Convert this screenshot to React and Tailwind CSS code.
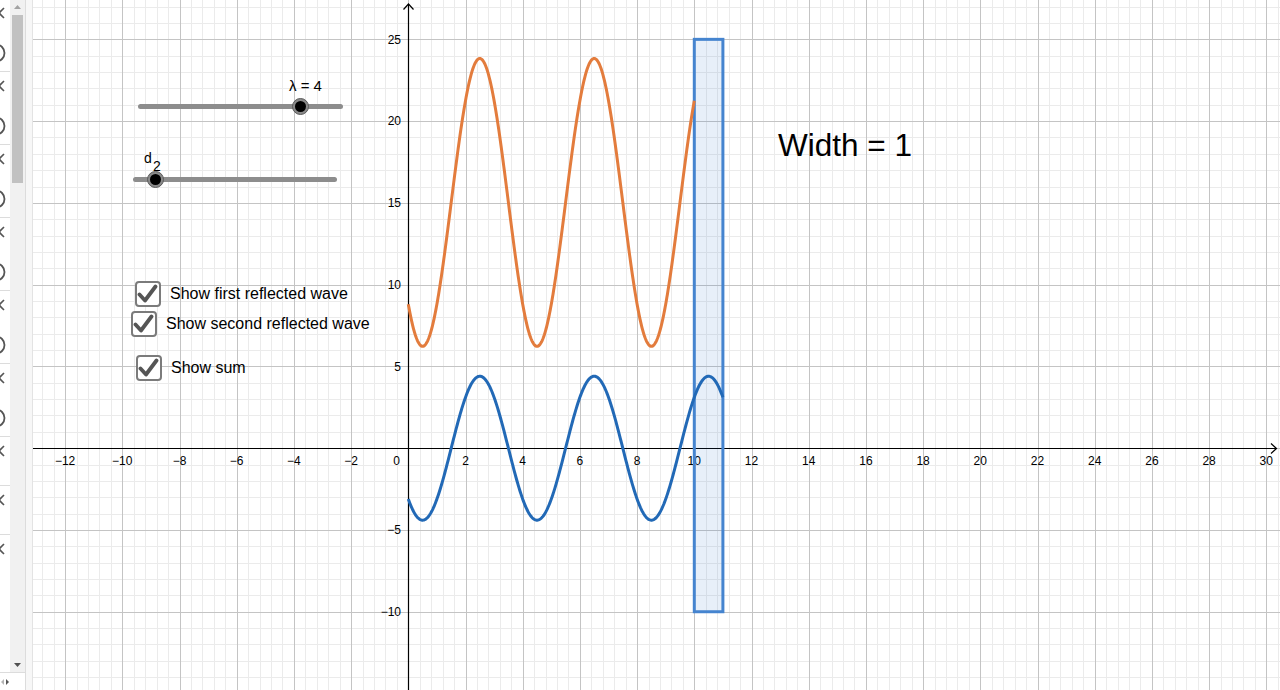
import React from "react";

// graph coordinates (relative to the graphics view, which starts at x=33)
const OX = 375.3;
const OY = 448.2;
const SX = 28.6;
const SY = 16.354;
const W = 1247;
const H = 690;
const px = (x) => OX + x * SX;
const py = (y) => OY - y * SY;

const wave = (x) => Math.sin((Math.PI * (x - 1.5)) / 2);

function curvePath(f, a, b) {
  let d = "";
  const n = 500;
  for (let i = 0; i <= n; i++) {
    const x = a + ((b - a) * i) / n;
    d += (i ? "L" : "M") + px(x).toFixed(2) + " " + py(f(x)).toFixed(2);
  }
  return d;
}

function gridLines() {
  const vMinor = [];
  const vMajor = [];
  const step = SX * 0.4;
  for (let k = Math.ceil(-OX / step); OX + k * step <= W; k++) {
    const x = Math.round(OX + k * step) + 0.5;
    (k % 5 === 0 ? vMajor : vMinor).push(x);
  }
  const hMinor = [];
  const hMajor = [];
  for (let k = Math.ceil((OY - H) / SY); k <= Math.floor(OY / SY); k++) {
    const y = Math.round(OY - k * SY) + 0.5;
    (k % 5 === 0 ? hMajor : hMinor).push(y);
  }
  return { vMinor, vMajor, hMinor, hMajor };
}

const fmt = (v) => (v < 0 ? "\u2212" + -v : String(v));

function Graph() {
  const { vMinor, vMajor, hMinor, hMajor } = gridLines();
  const xLabels = [];
  for (let v = -12; v <= 30; v += 2) if (v !== 0) xLabels.push(v);
  const yLabels = [25, 20, 15, 10, 5, -5, -10];
  const ax = Math.round(OX) + 0.5;
  const ay = Math.round(OY) + 0.5;

  return (
    <svg width={W} height={H} className="block">
      <g shapeRendering="crispEdges" strokeWidth="1">
        {vMinor.map((x) => (
          <line key={"vm" + x} x1={x} y1={0} x2={x} y2={H} stroke="#ebebeb" />
        ))}
        {hMinor.map((y) => (
          <line key={"hm" + y} x1={0} y1={y} x2={W} y2={y} stroke="#ebebeb" />
        ))}
        {vMajor.map((x) => (
          <line key={"vM" + x} x1={x} y1={0} x2={x} y2={H} stroke="#c4c4c4" />
        ))}
        {hMajor.map((y) => (
          <line key={"hM" + y} x1={0} y1={y} x2={W} y2={y} stroke="#c4c4c4" />
        ))}
      </g>

      {/* axes */}
      <g stroke="#000" strokeWidth="1.2" fill="none">
        <line x1={0} y1={ay} x2={1243.5} y2={ay} />
        <polyline points={`1238,${ay - 5} 1243.5,${ay} 1238,${ay + 5}`} />
        <line x1={ax} y1={4} x2={ax} y2={H} />
        <polyline points={`${ax - 5},9.5 ${ax},4 ${ax + 5},9.5`} />
      </g>

      <g fontSize="12" fill="#000">
        {xLabels.map((v) => (
          <text key={"x" + v} x={px(v)} y={465} textAnchor="middle">
            {fmt(v)}
          </text>
        ))}
        <text x={367} y={465} textAnchor="end">
          0
        </text>
        {yLabels.map((v) => (
          <text key={"y" + v} x={368} y={py(v) + 4.3} textAnchor="end">
            {fmt(v)}
          </text>
        ))}
      </g>

      {/* rectangle x = 10..11, y = -10..25 */}
      <rect
        x={px(10)}
        y={py(25)}
        width={SX}
        height={py(-10) - py(25)}
        fill="rgba(21,101,192,0.1)"
        stroke="#4584cf"
        strokeWidth="3"
      />

      <path
        d={curvePath((x) => 15.03 + 8.8 * wave(x), 0, 10)}
        fill="none"
        stroke="#e37c3d"
        strokeWidth="3"
      />
      <path
        d={curvePath((x) => 4.4 * wave(x), 0, 11)}
        fill="none"
        stroke="#2269b6"
        strokeWidth="3"
      />

      <text x={745} y={156} fontSize="31.5" fill="#000">
        Width = 1
      </text>
    </svg>
  );
}

function Check({ className, label }) {
  return (
    <div className={"absolute flex items-center gap-[9px] " + className}>
      <div className="w-[26px] h-[26px] rounded-[4px] border-2 border-[#7b7b7b] bg-white flex items-center justify-center">
        <svg width="22" height="22" viewBox="0 0 22 22">
          <path
            d="M2.5 11.5 L8 17.5 L18.5 3.5"
            fill="none"
            stroke="#555"
            strokeWidth="3.8"
            strokeLinecap="round"
            strokeLinejoin="round"
          />
        </svg>
      </div>
      <span className="text-[16px] leading-4 text-black whitespace-nowrap">{label}</span>
    </div>
  );
}

function SliderPoint({ className }) {
  return (
    <div
      className={
        "absolute w-[17px] h-[17px] rounded-full bg-[#8a8a8a] border border-[#5a5a5a] flex items-center justify-center " +
        className
      }
    >
      <div className="w-[11px] h-[11px] rounded-full bg-black" />
    </div>
  );
}

function AlgebraStrip() {
  const rows = [73, 73, 73, 73, 73, 73, 49, 49, 49];
  return (
    <div className="w-[10px] h-full bg-white flex flex-col overflow-hidden">
      <div className="mt-[-1px]" />
      {rows.map((h, i) => (
        <div
          key={i}
          className={
            "relative shrink-0 " + (i < rows.length - 1 ? "border-b border-[#dcdcdc]" : "")
          }
          style={{ height: h }}
        >
          <svg width="10" height={h} className="absolute left-0 top-0">
            <g stroke="#555" strokeWidth="1.6" fill="none">
              <line x1={-6} y1={9} x2={4} y2={19} />
              <line x1={-6} y1={19} x2={4} y2={9} />
              {h > 60 && <circle cx={-4} cy={54} r={8.5} strokeWidth="1.8" />}
            </g>
          </svg>
        </div>
      ))}
    </div>
  );
}

export default function App() {
  return (
    <div className="w-[1280px] h-[690px] flex bg-white overflow-hidden font-['Liberation_Sans',Arial,sans-serif]">
      <div className="w-[25px] h-full flex flex-col">
        <div className="flex flex-1 min-h-0">
          <AlgebraStrip />
          <div className="w-[15px] h-full bg-[#f1f1f1] flex flex-col items-center pt-[5px] pb-[5px]">
            <svg width="7" height="4" viewBox="0 0 7 4">
              <path d="M0 4 L3.5 0 L7 4 Z" fill="#a3a3a3" />
            </svg>
            <div className="mt-[6px] w-[11px] h-[168px] bg-[#c1c1c1]" />
            <div className="flex-1" />
            <svg width="7" height="4" viewBox="0 0 7 4">
              <path d="M0 0 L3.5 4 L7 0 Z" fill="#505050" />
            </svg>
          </div>
        </div>
        <div className="h-[18px] border-t border-[#dcdcdc] bg-white flex items-center pl-[1px]">
          <svg width="8" height="6" viewBox="0 0 8 6">
            <path d="M0 3 L3 0 L3 6 Z" fill="#b5b5b5" />
            <path d="M8 3 L5 0 L5 6 Z" fill="#555" />
          </svg>
        </div>
      </div>
      <div className="w-px h-full bg-[#dcdcdc]" />
      <div className="w-[6px] h-full bg-[#f7f7f7]" />
      <div className="w-px h-full bg-[#e3e3e3]" />

      <div className="relative flex-1 h-full overflow-hidden">
        <Graph />

        {/* slider λ */}
        <div className="absolute left-[256px] top-[78px] text-[15px] leading-none text-black whitespace-nowrap">
          λ = 4
        </div>
        <div className="absolute left-[105px] top-[104px] w-[205px] h-[5px] rounded-full bg-[#8d8d8d]" />
        <SliderPoint className="left-[259px] top-[98px]" />

        {/* slider d2 */}
        <div className="absolute left-[111px] top-[151px] text-[14px] leading-none text-black">d</div>
        <div className="absolute left-[120px] top-[159px] text-[14px] leading-none text-black">2</div>
        <div className="absolute left-[100px] top-[176.5px] w-[204px] h-[5px] rounded-full bg-[#8d8d8d]" />
        <SliderPoint className="left-[114px] top-[170.5px]" />

        <Check className="left-[102px] top-[281px]" label="Show first reflected wave" />
        <Check className="left-[98px] top-[311px]" label="Show second reflected wave" />
        <Check className="left-[103px] top-[355px]" label="Show sum" />
      </div>
    </div>
  );
}
